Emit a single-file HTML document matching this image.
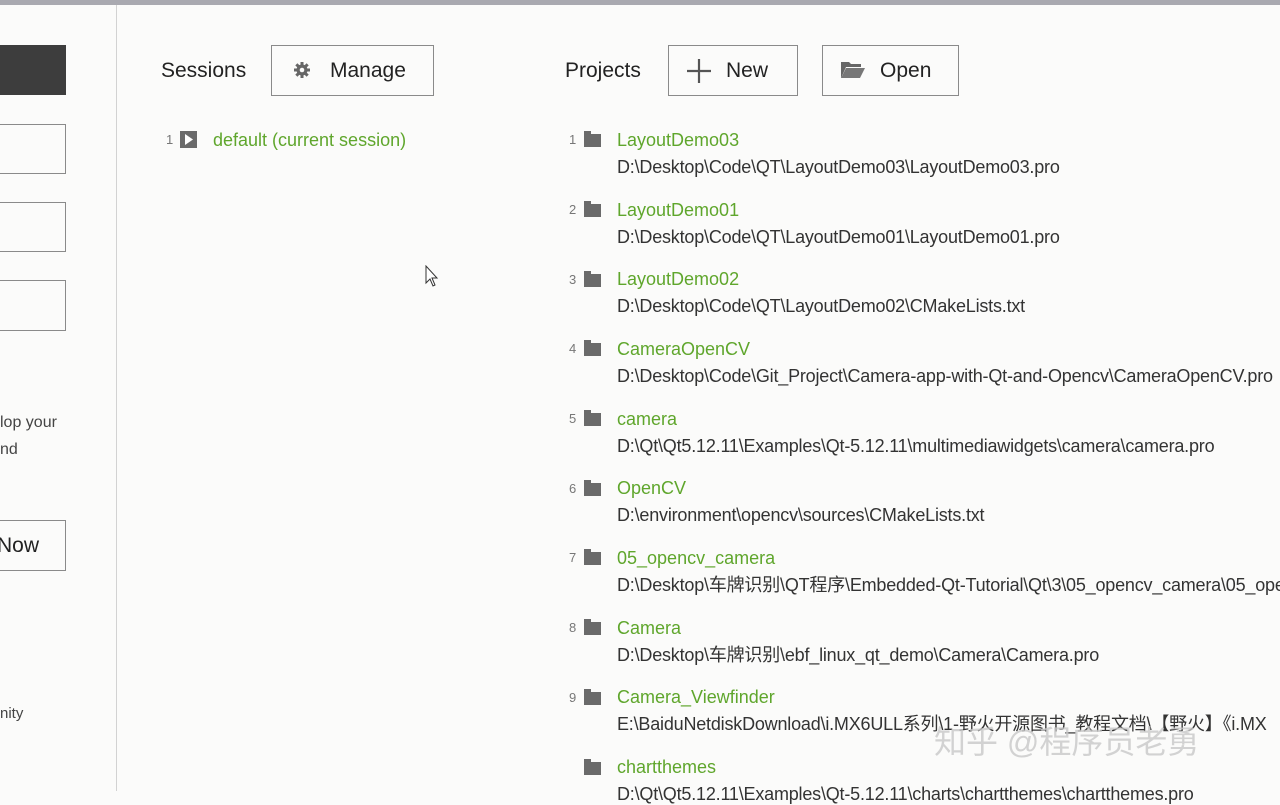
<!DOCTYPE html>
<html><head><meta charset="utf-8"><style>
html,body{margin:0;padding:0;width:1280px;height:791px;overflow:hidden;background:#fbfbfa;font-family:"Liberation Sans","Noto Sans CJK SC",sans-serif;}
.a{position:absolute;white-space:nowrap;line-height:22px;}
.top{position:absolute;left:0;top:0;width:1280px;height:5px;background:#a9a9b0;}
.div{position:absolute;left:116px;top:5px;width:1px;height:786px;background:#d2d2d2;}
.box{position:absolute;border:1px solid #8a8a8a;box-sizing:border-box;background:#fbfbfa;}
.h{font-size:21px;color:#222;}
.bt{font-size:21px;color:#222;}
.num{font-size:13px;color:#777;}
.nm{font-size:18px;color:#5fa62c;}
.pt{font-size:18px;color:#333;letter-spacing:-0.2px;}
.fold{position:absolute;width:17px;height:13px;background:#6a6a6a;}
.fold:before{content:"";position:absolute;left:0;top:-3px;width:7px;height:3px;background:#6a6a6a;}
.lt{font-size:16px;color:#444;}
</style></head><body>
<div class="top"></div>
<div class="div"></div>
<div class="a" style="left:0;top:45px;width:66px;height:50px;background:#3d3d3d;"></div>
<div class="box" style="left:-2px;top:124px;width:68px;height:50px;"></div>
<div class="box" style="left:-2px;top:202px;width:68px;height:50px;"></div>
<div class="box" style="left:-2px;top:280px;width:68px;height:51px;"></div>
<div class="a lt" style="left:0;top:412px;">lop your</div>
<div class="a lt" style="left:0;top:439px;">nd</div>
<div class="box" style="left:-2px;top:520px;width:68px;height:51px;"></div>
<div class="a" style="left:-3px;top:535px;font-size:21px;color:#222;">Now</div>
<div class="a lt" style="left:0;top:703px;font-size:15px;">nity</div>

<div class="a h" style="left:161px;top:60px;">Sessions</div>
<div class="box" style="left:271px;top:45px;width:163px;height:51px;"></div>
<svg class="a" style="left:293px;top:61px" width="18" height="18" viewBox="0 0 18 18"><g fill="#666"><circle cx="9" cy="9" r="5.5"/><rect x="7.5" y="1" width="3" height="16"/><rect x="1" y="7.5" width="16" height="3"/><rect x="7.5" y="1" width="3" height="16" transform="rotate(45 9 9)"/><rect x="7.5" y="1" width="3" height="16" transform="rotate(-45 9 9)"/></g><circle cx="9" cy="9" r="2.3" fill="#fbfbfa"/></svg>
<div class="a bt" style="left:330px;top:60px;">Manage</div>
<div class="a num" style="left:166px;top:129px;">1</div>
<div class="a" style="left:180px;top:131px;width:17px;height:17px;background:#6a6a6a;"></div>
<svg class="a" style="left:184px;top:134px" width="10" height="11"><path d="M1 0 L9 5.5 L1 11Z" fill="#fff"/></svg>
<div class="a nm" style="left:213px;top:129px;">default (current session)</div>

<svg class="a" style="left:423px;top:265px" width="16" height="24"><path d="M3 1 L3 18 L7 14 L10 21 L12 20 L9 13 L14 13Z" fill="#fff" stroke="#333" stroke-width="1"/></svg>

<div class="a h" style="left:565px;top:60px;">Projects</div>
<div class="box" style="left:668px;top:45px;width:130px;height:51px;"></div>
<svg class="a" style="left:687px;top:59px" width="24" height="24"><path d="M12 0V24M0 12H24" stroke="#555" stroke-width="2.2"/></svg>
<div class="a bt" style="left:726px;top:60px;">New</div>
<div class="box" style="left:822px;top:45px;width:137px;height:51px;"></div>
<svg class="a" style="left:841px;top:61px" width="24" height="18"><path d="M0 1H8L10 3H20V6H5L0 17Z" fill="#666"/><path d="M5 7H24L19 17H0Z" fill="#777"/></svg>
<div class="a bt" style="left:880px;top:60px;">Open</div>

<div class="a num" style="left:569px;top:129px">1</div><div class="fold" style="left:584px;top:134px"></div><div class="a nm" style="left:617px;top:129px">LayoutDemo03</div><div class="a pt" style="left:617px;top:156px">D:\Desktop\Code\QT\LayoutDemo03\LayoutDemo03.pro</div>
<div class="a num" style="left:569px;top:199px">2</div><div class="fold" style="left:584px;top:204px"></div><div class="a nm" style="left:617px;top:199px">LayoutDemo01</div><div class="a pt" style="left:617px;top:226px">D:\Desktop\Code\QT\LayoutDemo01\LayoutDemo01.pro</div>
<div class="a num" style="left:569px;top:269px">3</div><div class="fold" style="left:584px;top:274px"></div><div class="a nm" style="left:617px;top:268px">LayoutDemo02</div><div class="a pt" style="left:617px;top:295px">D:\Desktop\Code\QT\LayoutDemo02\CMakeLists.txt</div>
<div class="a num" style="left:569px;top:338px">4</div><div class="fold" style="left:584px;top:343px"></div><div class="a nm" style="left:617px;top:338px">CameraOpenCV</div><div class="a pt" style="left:617px;top:365px">D:\Desktop\Code\Git_Project\Camera-app-with-Qt-and-Opencv\CameraOpenCV.pro</div>
<div class="a num" style="left:569px;top:408px">5</div><div class="fold" style="left:584px;top:413px"></div><div class="a nm" style="left:617px;top:408px">camera</div><div class="a pt" style="left:617px;top:435px">D:\Qt\Qt5.12.11\Examples\Qt-5.12.11\multimediawidgets\camera\camera.pro</div>
<div class="a num" style="left:569px;top:478px">6</div><div class="fold" style="left:584px;top:483px"></div><div class="a nm" style="left:617px;top:477px">OpenCV</div><div class="a pt" style="left:617px;top:504px">D:\environment\opencv\sources\CMakeLists.txt</div>
<div class="a num" style="left:569px;top:547px">7</div><div class="fold" style="left:584px;top:552px"></div><div class="a nm" style="left:617px;top:547px">05_opencv_camera</div><div class="a pt" style="left:617px;top:574px">D:\Desktop\车牌识别\QT程序\Embedded-Qt-Tutorial\Qt\3\05_opencv_camera\05_opencv</div>
<div class="a num" style="left:569px;top:617px">8</div><div class="fold" style="left:584px;top:622px"></div><div class="a nm" style="left:617px;top:617px">Camera</div><div class="a pt" style="left:617px;top:644px">D:\Desktop\车牌识别\ebf_linux_qt_demo\Camera\Camera.pro</div>
<div class="a num" style="left:569px;top:687px">9</div><div class="fold" style="left:584px;top:692px"></div><div class="a nm" style="left:617px;top:686px">Camera_Viewfinder</div><div class="a pt" style="left:617px;top:713px">E:\BaiduNetdiskDownload\i.MX6ULL系列\1-野火开源图书_教程文档\【野火】《i.MX</div>
<div class="fold" style="left:584px;top:762px"></div><div class="a nm" style="left:617px;top:756px">chartthemes</div><div class="a pt" style="left:617px;top:783px">D:\Qt\Qt5.12.11\Examples\Qt-5.12.11\charts\chartthemes\chartthemes.pro</div>
<div class="a" style="left:934px;top:722px;font-size:32px;line-height:40px;color:rgba(200,200,200,0.8);">知乎 @程序员老勇</div>
</body></html>
